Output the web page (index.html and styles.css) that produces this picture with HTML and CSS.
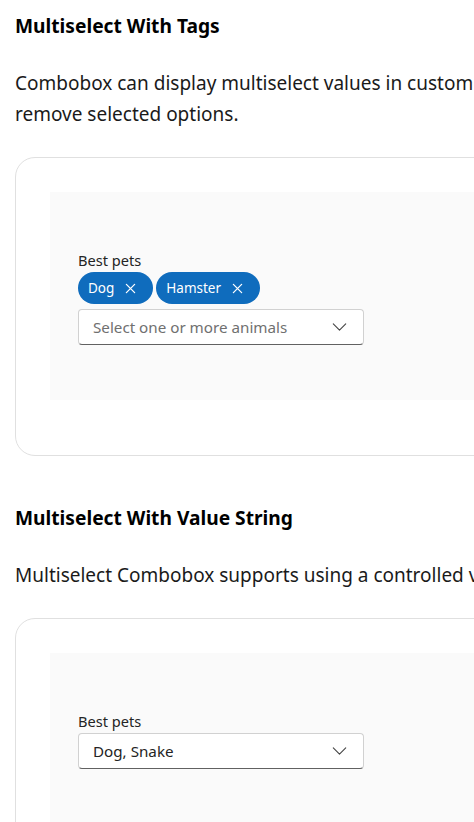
FILE: index.html
```html
<!DOCTYPE html>
<html lang="en">
<head>
    <meta charset="UTF-8">
    <meta name="viewport" content="width=device-width, initial-scale=1.0">
    <title>Combobox - Multiselect</title>
    <link rel="stylesheet" href="styles.css">
</head>
<body>
    <main class="docs">
        <!-- Multiselect with tags -->
        <section class="story">
            <h3 class="story-title">Multiselect With Tags</h3>
            <p class="story-desc">Combobox can display multiselect values in custom tags. This example uses a controlled selection so the tags can be used to<br>remove selected options.</p>
            <div class="preview">
                <div class="canvas">
                    <div class="field">
                        <label class="field-label">Best pets</label>
                        <ul class="tag-list">
                            <li class="tag">
                                <span>Dog</span>
                                <svg class="tag-dismiss" viewBox="0 0 12 12" width="11" height="11"><path d="M1.5 1.5l9 9M10.5 1.5l-9 9"/></svg>
                            </li>
                            <li class="tag">
                                <span>Hamster</span>
                                <svg class="tag-dismiss" viewBox="0 0 12 12" width="11" height="11"><path d="M1.5 1.5l9 9M10.5 1.5l-9 9"/></svg>
                            </li>
                        </ul>
                        <div class="combobox">
                            <span class="combobox-placeholder">Select one or more animals</span>
                            <svg class="chevron" viewBox="0 0 16 9" width="15" height="8"><path d="M1 1l7 7 7-7"/></svg>
                        </div>
                    </div>
                </div>
            </div>
        </section>

        <!-- Multiselect with value string -->
        <section class="story">
            <h3 class="story-title">Multiselect With Value String</h3>
            <p class="story-desc">Multiselect Combobox supports using a controlled value to display the selected options as a string.</p>
            <div class="preview">
                <div class="canvas">
                    <div class="field">
                        <label class="field-label">Best pets</label>
                        <div class="combobox">
                            <span class="combobox-value">Dog, Snake</span>
                            <svg class="chevron" viewBox="0 0 16 9" width="15" height="8"><path d="M1 1l7 7 7-7"/></svg>
                        </div>
                    </div>
                </div>
            </div>
        </section>
    </main>
</body>
</html>
```

FILE: styles.css
```css
* {
    margin: 0;
    padding: 0;
    box-sizing: border-box;
}

html, body {
    overflow: hidden;
}

body {
    font-family: 'Noto Sans', 'Open Sans', sans-serif;
    background-color: #ffffff;
    color: #242424;
}

.docs {
    width: 1000px;
    padding: 12px 0 0 15px;
}

/* 每個範例區塊 */
.story {
    margin-bottom: 48px;
}

.story-title {
    font-size: 19.2px;
    line-height: 28px;
    font-weight: 700;
    color: #000;
    margin-bottom: 28px;
}

.story-desc {
    font-size: 19px;
    line-height: 31px;
    white-space: nowrap;
    color: #1a1a1a;
    margin-bottom: 27px;
}

.preview {
    width: 900px;
    border: 1px solid #e0e0e0;
    border-radius: 20px;
    padding: 34px 34px 55px;
}

.canvas {
    background-color: #fafafa;
    padding: 58px 28px 55px;
}

.field {
    display: flex;
    flex-direction: column;
    align-items: flex-start;
}

.field-label {
    font-size: 14.6px;
    line-height: 20px;
    color: #242424;
    margin-bottom: 2px;
}

/* 標籤 */
.tag-list {
    list-style: none;
    display: flex;
    gap: 3px;
    margin-bottom: 5px;
}

.tag {
    display: flex;
    align-items: center;
    gap: 11px;
    height: 32px;
    padding: 0 17px 0 10px;
    background-color: #0f6cbd;
    color: #fff;
    border-radius: 16px;
    font-size: 13.5px;
}

.tag-dismiss path {
    fill: none;
    stroke: #fff;
    stroke-width: 1.4;
    stroke-linecap: round;
}

/* 下拉框 */
.combobox {
    display: flex;
    align-items: center;
    justify-content: space-between;
    width: 286px;
    height: 36px;
    padding: 0 16px 0 14px;
    background-color: #fff;
    border: 1px solid #d1d1d1;
    border-bottom-color: #616161;
    border-radius: 4px;
    font-size: 15.2px;
}

.combobox-placeholder {
    color: #707070;
}

.combobox-value {
    color: #242424;
}

.chevron path {
    fill: none;
    stroke: #424242;
    stroke-width: 1.2;
    stroke-linecap: round;
    stroke-linejoin: round;
}
```
